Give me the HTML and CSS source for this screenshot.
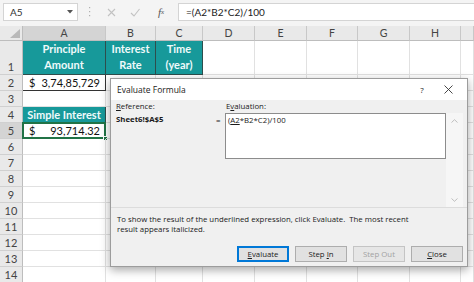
FILE: index.html
```html
<!DOCTYPE html>
<html>
<head>
<meta charset="utf-8">
<link rel="stylesheet" href="styles.css">
</head>
<body>
<div class="app">
  <div class="fbar">
    <div class="namebox"><span>A5</span><svg class="caret" width="6" height="4" viewBox="0 0 6 4"><path d="M0 0h6L3 3.5z" fill="#555"/></svg></div>
    <div class="grip"><svg width="3" height="10" viewBox="0 0 3 10"><rect x="1" y="0" width="1.2" height="1.2" fill="#b0b0b0"/><rect x="1" y="4" width="1.2" height="1.2" fill="#b0b0b0"/><rect x="1" y="8" width="1.2" height="1.2" fill="#b0b0b0"/></svg></div>
    <div class="fbtn"><svg width="9" height="9" viewBox="0 0 9 9"><path d="M1 1L8 8M8 1L1 8" stroke="#c2c2c2" stroke-width="1.1"/></svg></div>
    <div class="fbtn"><svg width="10" height="9" viewBox="0 0 10 9"><path d="M1 5l3 3L9.5 1" stroke="#c2c2c2" stroke-width="1.1" fill="none"/></svg></div>
    <div class="fbtn fx"><i>f</i><sub>x</sub></div>
    <div class="formula">=(A2*B2*C2)/100</div>
  </div>

  <div class="sheet">
    <div class="corner"><svg width="10" height="9" viewBox="0 0 10 9"><path d="M10 0V9H0z" fill="#b9b9b9"/></svg></div>
    <div class="h sel">A</div><div class="h">B</div><div class="h">C</div><div class="h">D</div><div class="h">E</div><div class="h">F</div><div class="h">G</div><div class="h">H</div><div class="h"></div>

    <div class="r">1</div>
    <div class="t">Principle<br>Amount</div><div class="t">Interest<br>Rate</div><div class="t">Time<br>(year)</div>
    <div class="c"></div><div class="c"></div><div class="c"></div><div class="c"></div><div class="c"></div><div class="c"></div>

    <div class="r">2</div>
    <div class="c acct boxed"><span>$</span><span>3,74,85,729</span></div>
    <div class="c"></div><div class="c"></div><div class="c"></div><div class="c"></div><div class="c"></div><div class="c"></div><div class="c"></div><div class="c"></div>

    <div class="r">3</div>
    <div class="c"></div><div class="c"></div><div class="c"></div><div class="c"></div><div class="c"></div><div class="c"></div><div class="c"></div><div class="c"></div><div class="c"></div>

    <div class="r">4</div>
    <div class="t t1">Simple Interest</div>
    <div class="c"></div><div class="c"></div><div class="c"></div><div class="c"></div><div class="c"></div><div class="c"></div><div class="c"></div><div class="c"></div>

    <div class="r rsel">5</div>
    <div class="c acct boxed active"><span>$</span><span>93,714.32</span><div class="selbox"></div><div class="handle"></div></div>
    <div class="c"></div><div class="c"></div><div class="c"></div><div class="c"></div><div class="c"></div><div class="c"></div><div class="c"></div><div class="c"></div>

    <div class="r">6</div>
    <div class="c"></div><div class="c"></div><div class="c"></div><div class="c"></div><div class="c"></div><div class="c"></div><div class="c"></div><div class="c"></div><div class="c"></div>
    <div class="r">7</div>
    <div class="c"></div><div class="c"></div><div class="c"></div><div class="c"></div><div class="c"></div><div class="c"></div><div class="c"></div><div class="c"></div><div class="c"></div>
    <div class="r">8</div>
    <div class="c"></div><div class="c"></div><div class="c"></div><div class="c"></div><div class="c"></div><div class="c"></div><div class="c"></div><div class="c"></div><div class="c"></div>
    <div class="r">9</div>
    <div class="c"></div><div class="c"></div><div class="c"></div><div class="c"></div><div class="c"></div><div class="c"></div><div class="c"></div><div class="c"></div><div class="c"></div>
    <div class="r">10</div>
    <div class="c"></div><div class="c"></div><div class="c"></div><div class="c"></div><div class="c"></div><div class="c"></div><div class="c"></div><div class="c"></div><div class="c"></div>
    <div class="r">11</div>
    <div class="c"></div><div class="c"></div><div class="c"></div><div class="c"></div><div class="c"></div><div class="c"></div><div class="c"></div><div class="c"></div><div class="c"></div>
    <div class="r">12</div>
    <div class="c"></div><div class="c"></div><div class="c"></div><div class="c"></div><div class="c"></div><div class="c"></div><div class="c"></div><div class="c"></div><div class="c"></div>
    <div class="r">13</div>
    <div class="c"></div><div class="c"></div><div class="c"></div><div class="c"></div><div class="c"></div><div class="c"></div><div class="c"></div><div class="c"></div><div class="c"></div>
    <div class="r">14</div>
    <div class="c"></div><div class="c"></div><div class="c"></div><div class="c"></div><div class="c"></div><div class="c"></div><div class="c"></div><div class="c"></div><div class="c"></div>
  </div>

  <div class="dialog">
    <div class="dtitle">
      <span class="tt">Evaluate Formula</span>
      <span class="help">?</span>
      <span class="dclose"><svg width="9" height="9" viewBox="0 0 9 9"><path d="M0.5 0.5L8.5 8.5M8.5 0.5L0.5 8.5" stroke="#333" stroke-width="0.9"/></svg></span>
    </div>
    <div class="dbody">
      <div class="evrow">
        <div class="refcol">
          <div class="lbl"><u>R</u>eference:</div>
          <div class="refval">Sheet6!$A$5</div>
        </div>
        <div class="eq">=</div>
        <div class="evcol">
          <div class="lbl">E<u>v</u>aluation:</div>
          <div class="evarea">
            <div class="evbox">(<u>A2</u>*B2*C2)/100</div>
            <div class="scroll">
              <svg width="7" height="4" viewBox="0 0 7 4"><path d="M0.5 3.5L3.5 0.7L6.5 3.5" stroke="#b8b8b8" stroke-width="0.9" fill="none"/></svg>
              <svg width="7" height="4" viewBox="0 0 7 4"><path d="M0.5 0.5L3.5 3.3L6.5 0.5" stroke="#b8b8b8" stroke-width="0.9" fill="none"/></svg>
            </div>
          </div>
        </div>
      </div>
      <div class="info">To show the result of the underlined expression, click Evaluate.&nbsp; The most recent<br>result appears italicized.</div>
      <div class="btns">
        <div class="btn def"><span><u>E</u>valuate</span></div>
        <div class="btn"><span>Step <u>I</u>n</span></div>
        <div class="btn dis"><span>Step Out</span></div>
        <div class="btn"><span><u>C</u>lose</span></div>
      </div>
    </div>
  </div>
</div>
</body>
</html>
```
FILE: styles.css
```css
* { box-sizing: border-box; }
body { margin: 0; background: #fff; font-family: Lato, "Liberation Sans", sans-serif; color: #222; overflow: hidden; }
.app { position: relative; width: 474px; height: 282px; overflow: hidden; }

.fbar { height: 26px; background: #f4f4f4; display: flex; align-items: flex-start; padding: 3px 0 0 3px; }
.namebox { width: 75px; height: 18px; background: #fff; border: 1px solid #d4d4d4; display: flex; align-items: center; justify-content: space-between; padding: 0 4px 0 6px; font-size: 10px; color: #333; }
.grip { width: 22px; height: 18px; display: flex; align-items: center; justify-content: center; }
.fbtn { width: 23px; height: 18px; display: flex; align-items: center; justify-content: center; }
.fx { width: 30px; font-family: "Liberation Serif", serif; font-size: 11px; color: #555; }
.fx sub { font-size: 7px; font-style: italic; vertical-align: -1px; }
.formula { flex: 1; margin-left: 2px; height: 18px; background: #fff; border: 1px solid #d4d4d4; border-right: none; padding-left: 7px; font-size: 10px; line-height: 16px; color: #222; }

.sheet { display: grid; grid-template-columns: 23px 83px 50px 47px 52px 52px 51px 52px 51px 13px; grid-template-rows: 15px 34px repeat(13, 16px); }
.corner { background: #e9e9e9; border-right: 1px solid #bdbdbd; border-bottom: 1px solid #bdbdbd; display: flex; align-items: flex-end; justify-content: flex-end; padding: 0 2px 2px 0; }
.h { background: #e9e9e9; border-right: 1px solid #c8c8c8; border-bottom: 1px solid #bdbdbd; font-size: 10.5px; color: #444; display: flex; align-items: center; justify-content: center; }
.h.sel { background: #d4d4d4; }
.r { background: #e9e9e9; border-right: 1px solid #bdbdbd; border-bottom: 1px solid #d0d0d0; display: flex; align-items: flex-end; justify-content: center; font-size: 11px; line-height: 15px; color: #444; }
.r.rsel { background: #d4d4d4; }
.c { border-right: 1px solid #e1e1e1; border-bottom: 1px solid #e1e1e1; position: relative; }
.t { background: #17999a; color: #effafa; font-weight: 700; font-size: 11px; line-height: 16px; text-align: center; display: flex; align-items: flex-end; justify-content: center; padding-bottom: 1px; border-right: 1px solid #2e4d4c; border-bottom: 1px solid #2e4d4c; }
.t1 { line-height: 15px; padding-bottom: 0; }
.acct { display: flex; justify-content: space-between; align-items: flex-end; padding: 0 5px 0 6px; font-size: 11px; line-height: 15px; color: #111; }
.boxed { border-right: 1px solid #333; border-bottom: 1px solid #333; }
.selbox { position: absolute; left: -1px; top: -1px; right: -1px; bottom: -1px; border: 2px solid #217346; }
.handle { position: absolute; right: -3px; bottom: -3px; width: 5px; height: 5px; background: #217346; border: 1px solid #fff; }

.dialog { position: absolute; left: 110px; top: 78px; width: 358px; height: 189px; background: #f0f0f0; border: 1px solid #9c9c9c; box-shadow: 0 3px 9px rgba(0,0,0,0.35); font-family: "Open Sans", sans-serif; font-size: 7.8px; color: #1a1a1a; display: flex; flex-direction: column; }
.dtitle { height: 21px; background: #fff; display: flex; align-items: center; padding-left: 6px; font-size: 8.5px; }
.dtitle .tt { flex: 1; }
.help { width: 26px; text-align: center; font-size: 8px; }
.dclose { width: 26px; display: flex; justify-content: center; margin-right: 6px; }
.dbody { flex: 1; display: flex; flex-direction: column; }
.evrow { display: flex; padding-left: 5px; }
.refcol { width: 100px; }
.lbl { height: 13px; line-height: 13px; }
.refval { font-weight: 700; line-height: 13px; }
.eq { width: 9px; padding-top: 14px; line-height: 13px; }
.evcol { width: 238px; }
.evcol .lbl { padding-left: 1px; }
.evarea { display: flex; }
.evbox { width: 221px; height: 46px; background: #fff; border: 1px solid #8c8c8c; padding: 1px 2px; line-height: 11px; }
.scroll { width: 17px; height: 94px; background: #f6f6f6; display: flex; flex-direction: column; justify-content: space-between; align-items: center; padding: 6px 0 5px; }
.info { border-top: 1px solid #dcdcdc; padding: 6px 0 0 6px; line-height: 10px; }
.btns { display: flex; justify-content: flex-end; gap: 6px; padding-right: 4px; margin-top: 12px; }
.btn { width: 52px; height: 16px; background: #e1e1e1; border: 1px solid #adadad; display: flex; align-items: center; justify-content: center; }
.btn.def { border: 1px solid #0078d7; box-shadow: inset 0 0 0 1px #0078d7; }
.btn.dis { color: #a2a2a2; border-color: #c4c4c4; background: #e6e6e6; }
```
